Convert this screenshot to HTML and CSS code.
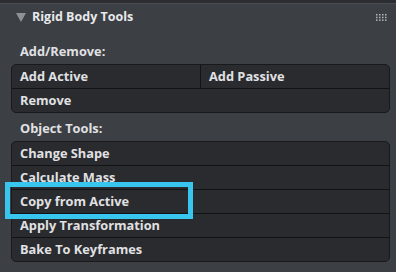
FILE: index.html
```html
<!DOCTYPE html>
<html>
<head>
<meta charset="utf-8">
<link rel="stylesheet" href="styles.css">
</head>
<body>
<div class="topbar"></div>
<div class="panel">
  <div class="header">
    <svg class="tri" width="10" height="10" viewBox="0 0 10 10"><polygon points="0,1 10,1 5,10" fill="#8e9196"/></svg>
    <span class="title">Rigid Body Tools</span>
    <svg class="grip" width="11" height="7" viewBox="0 0 11 7">
      <g fill="#b4b7bc">
        <rect x="0" y="0" width="1.5" height="1.5"/><rect x="3" y="0" width="1.5" height="1.5"/><rect x="6" y="0" width="1.5" height="1.5"/><rect x="9" y="0" width="1.5" height="1.5"/>
        <rect x="0" y="2.7" width="1.5" height="1.5"/><rect x="3" y="2.7" width="1.5" height="1.5"/><rect x="6" y="2.7" width="1.5" height="1.5"/><rect x="9" y="2.7" width="1.5" height="1.5"/>
        <rect x="0" y="5.4" width="1.5" height="1.5"/><rect x="3" y="5.4" width="1.5" height="1.5"/><rect x="6" y="5.4" width="1.5" height="1.5"/><rect x="9" y="5.4" width="1.5" height="1.5"/>
      </g>
    </svg>
  </div>
  <div class="label first">Add/Remove:</div>
  <div class="box">
    <div class="row split">
      <div class="cell">Add Active</div>
      <div class="cell">Add Passive</div>
    </div>
    <div class="row">Remove</div>
  </div>
  <div class="label">Object Tools:</div>
  <div class="box">
    <div class="row">Change Shape</div>
    <div class="row">Calculate Mass</div>
    <div class="row">Copy from Active</div>
    <div class="row">Apply Transformation</div>
    <div class="row">Bake To Keyframes</div>
  </div>
  <div class="label last">Constraints:</div>
  <div class="highlight"></div>
</div>
</body>
</html>
```

FILE: styles.css
```css
html, body {
  margin: 0;
  padding: 0;
  background: #3c3f44;
  overflow: hidden;
}
body {
  width: 396px;
  height: 272px;
  font-family: "Open Sans", "DejaVu Sans", sans-serif;
  font-weight: 700;
  font-size: 12.8px;
  color: #e0e1e3;
}
.topbar {
  height: 3px;
  background: #2b2d31;
  border-bottom: 1px solid #4a4d53;
}
.panel {
  position: relative;
}
.header {
  height: 25px;
  display: flex;
  align-items: center;
  padding-left: 16px;
  padding-right: 9px;
}
.tri {
  margin-right: 6px;
  margin-top: 1px;
}
.title {
  flex: 1;
  font-size: 12.5px;
  color: #e8e9eb;
}
.grip {
  margin-top: 2px;
}
.label {
  height: 24px;
  line-height: 24px;
  padding-left: 20px;
  margin-top: 3px;
}
.label.first {
  margin-top: 10px;
}
.box {
  margin: 1px 6px 0 11px;
  background: #2a2b2f;
  border: 1px solid #18191c;
  border-radius: 5px;
  overflow: hidden;
}
.row {
  height: 23px;
  line-height: 23px;
  padding-left: 8px;
  border-top: 1px solid #121315;
}
.row:first-child {
  border-top: none;
}
.row.split {
  display: flex;
  padding-left: 0;
}
.cell {
  flex: 1;
  padding-left: 8px;
}
.cell + .cell {
  border-left: 1px solid #121315;
}
.label.last {
  margin-top: 5px;
}
.highlight {
  position: absolute;
  left: 5px;
  top: 178px;
  width: 178px;
  height: 27px;
  border: 5px solid #38c6ef;
}
```
